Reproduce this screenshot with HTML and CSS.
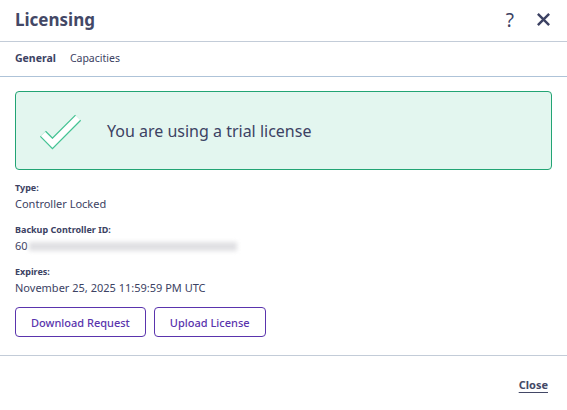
FILE: index.html
```html
<!DOCTYPE html>
<html lang="en">
<head>
    <meta charset="UTF-8">
    <meta name="viewport" content="width=device-width, initial-scale=1.0">
    <title>Licensing</title>
    <link rel="stylesheet" href="styles.css">
</head>
<body>
    <div class="dialog">
        <div class="dialog-header">
            <h1 class="dialog-title">Licensing</h1>
            <div class="header-actions">
                <span class="help">?</span>
                <svg class="close-icon" viewBox="0 0 16 16" fill="none" stroke="currentColor" stroke-width="2.6">
                    <path d="M2 2 L14 14 M14 2 L2 14" />
                </svg>
            </div>
        </div>

        <div class="tabs">
            <span class="tab active">General</span>
            <span class="tab">Capacities</span>
        </div>

        <div class="dialog-body">
            <div class="banner">
                <svg class="check" viewBox="0 0 48 40">
                    <polyline points="5,23 15,33 42,6" fill="none" stroke="#45c394" stroke-width="9" stroke-linejoin="miter" />
                    <polyline points="5,23 15,33 42,6" fill="none" stroke="#ffffff" stroke-width="6.4" stroke-linejoin="miter" />
                </svg>
                <span class="banner-text">You are using a trial license</span>
            </div>

            <div class="field">
                <div class="field-label">Type:</div>
                <div class="field-value">Controller Locked</div>
            </div>
            <div class="field">
                <div class="field-label">Backup Controller ID:</div>
                <div class="field-value">60<span class="blurred"></span></div>
            </div>
            <div class="field">
                <div class="field-label">Expires:</div>
                <div class="field-value">November 25, 2025 11:59:59 PM UTC</div>
            </div>

            <div class="buttons">
                <button class="btn">Download Request</button>
                <button class="btn">Upload License</button>
            </div>
        </div>

        <div class="dialog-footer">
            <a href="#" class="close-link">Close</a>
        </div>
    </div>
</body>
</html>
```

FILE: styles.css
```css
* {
    margin: 0;
    padding: 0;
    box-sizing: border-box;
    font-family: "Noto Sans", "Open Sans", sans-serif;
}

body {
    background: #ffffff;
    color: #3c4263;
    width: 567px;
    height: 410px;
    overflow: hidden;
}

.dialog {
    display: flex;
    flex-direction: column;
}

.dialog-header {
    height: 42px;
    display: flex;
    align-items: center;
    justify-content: space-between;
    padding: 0 16px 2px 15px;
    border-bottom: 1px solid #c3ccd8;
}

.dialog-title {
    font-size: 17px;
    font-weight: 700;
    color: #434866;
}

.header-actions {
    display: flex;
    align-items: center;
    gap: 22px;
}

.help {
    font-size: 19px;
    color: #3c4263;
}

.close-icon {
    width: 15px;
    height: 15px;
    color: #3c4263;
}

.tabs {
    height: 35px;
    display: flex;
    align-items: center;
    gap: 14px;
    padding: 0 15px 2px;
    border-bottom: 1px solid #aec3d8;
}

.tab {
    font-size: 10.5px;
    color: #3c4263;
}

.tab.active {
    font-weight: 700;
}

.dialog-body {
    padding: 14px 15px 18px;
    border-bottom: 1px solid #c3ccd8;
}

.banner {
    height: 79px;
    display: flex;
    align-items: center;
    background: #e3f6ef;
    border: 1px solid #22a474;
    border-radius: 4px;
    padding-left: 22px;
    margin-bottom: 11px;
}

.check {
    width: 46px;
    height: 38px;
    margin-right: 23px;
}

.banner-text {
    font-size: 16px;
    color: #3c4263;
}

.field {
    margin-bottom: 11px;
}

.field-label {
    font-size: 9px;
    font-weight: 700;
    line-height: 14px;
}

.field-value {
    font-size: 11px;
    line-height: 17px;
}

.blurred {
    display: inline-block;
    width: 208px;
    height: 9px;
    margin-left: 1px;
    vertical-align: -1px;
    background: #e0e0e3;
    filter: blur(2px);
}

.buttons {
    display: flex;
    gap: 8px;
    margin-top: 11px;
}

.btn {
    height: 30px;
    padding: 0 15px;
    background: #ffffff;
    border: 1px solid #5a34ad;
    border-radius: 4px;
    color: #5a34ad;
    font-size: 11px;
    font-weight: 500;
}

.dialog-footer {
    display: flex;
    justify-content: flex-end;
    padding: 21px 19px 0;
}

.close-link {
    font-size: 11px;
    font-weight: 700;
    color: #434866;
    text-underline-offset: 3px;
}
```
